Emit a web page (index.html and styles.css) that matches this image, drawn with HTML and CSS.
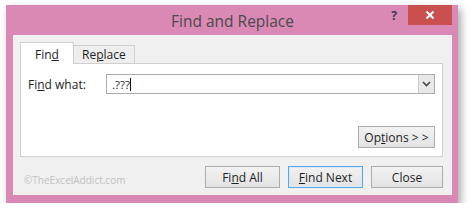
FILE: index.html
```html
<!DOCTYPE html>
<html lang="en">
<head>
    <meta charset="UTF-8">
    <title>Find and Replace</title>
    <link rel="stylesheet" href="styles.css">
</head>
<body>
    <div class="dialog">
        <div class="titlebar">
            <div class="title">Find and Replace</div>
            <div class="help">?</div>
            <div class="close-x">
                <svg width="10" height="10" viewBox="0 0 10 10">
                    <path d="M1.5 1.5 L8.5 8.5 M8.5 1.5 L1.5 8.5" stroke="#fff" stroke-width="2"/>
                </svg>
            </div>
        </div>
        <div class="content">
            <div class="tabs">
                <div class="tab active">Fin<u>d</u></div>
                <div class="tab">Re<u>p</u>lace</div>
            </div>
            <div class="panel">
                <div class="find-row">
                    <label>Fi<u>n</u>d what:</label>
                    <div class="combo">
                        <span class="combo-text">.???</span><span class="caret"></span>
                        <div class="combo-btn">
                            <svg width="9" height="6" viewBox="0 0 9 6">
                                <path d="M1 1 L4.5 4.5 L8 1" stroke="#444" stroke-width="1.6" fill="none"/>
                            </svg>
                        </div>
                    </div>
                </div>
                <div class="options-row">
                    <button class="btn options-btn">Op<u>t</u>ions &gt; &gt;</button>
                </div>
            </div>
            <div class="bottom-row">
                <span class="watermark">©TheExcelAddict.com</span>
                <button class="btn">Fi<u>n</u>d All</button>
                <button class="btn default-btn"><u>F</u>ind Next</button>
                <button class="btn close-btn">Close</button>
            </div>
        </div>
    </div>
</body>
</html>
```

FILE: styles.css
```css
body {
    margin: 0;
    padding: 5px 0 0 6px;
    background: #fff;
    font-family: 'Open Sans', 'Noto Sans', sans-serif;
    color: #1e1e1e;
}
.dialog {
    width: 439px;
    background: #da89b5;
    padding: 0 6px 8px 7px;
    box-shadow: 3px 4px 8px rgba(0, 0, 0, 0.35);
}
.titlebar {
    height: 30px;
    display: flex;
    align-items: flex-start;
    justify-content: flex-end;
    position: relative;
}
/* title is centred over the whole window, not the space left of the buttons */
.title {
    position: absolute;
    left: 0;
    right: 0;
    text-align: center;
    font-size: 15.5px;
    line-height: 33px;
    color: #4a4a4a;
}
.help {
    width: 24px;
    font-size: 12px;
    font-weight: bold;
    color: #3b3b55;
    line-height: 22px;
    text-align: center;
    margin-right: 2px;
    position: relative;
}
.close-x {
    width: 44px;
    height: 20px;
    background: #c9504f;
    display: flex;
    align-items: center;
    justify-content: center;
    position: relative;
}
.content {
    background: #f0f0f0;
    padding: 8px 9px 7px 7px;
}
.tabs {
    display: flex;
    align-items: flex-end;
    height: 20px;
}
.tab {
    font-size: 12px;
    padding: 0 10px 0 14px;
    height: 17px;
    line-height: 17px;
    border: 1px solid #d0d0d0;
    border-bottom: none;
    background: #eeeeee;
}
.tab.active {
    height: 21px;
    line-height: 23px;
    background: #fff;
    width: 28px;
    margin-bottom: -1px;
    position: relative;
    z-index: 1;
}
.tab:not(.active) {
    border-left: none;
    padding: 0 8px;
}
.panel {
    background: #fff;
    border: 1px solid #d0d0d0;
    height: 92px;
    padding: 0 7px;
    display: flex;
    flex-direction: column;
}
.find-row {
    display: flex;
    align-items: center;
    margin-top: 10px;
    height: 20px;
}
.find-row label {
    font-size: 12px;
    width: 78px;
}
.combo {
    flex: 1;
    height: 18px;
    border: 1px solid #acacac;
    display: flex;
    align-items: center;
    padding-left: 5px;
    font-size: 11.5px;
}
.combo-text {
    color: #2a2a2a;
}
.caret {
    width: 1px;
    height: 13px;
    background: #111;
}
.combo-btn {
    margin-left: auto;
    width: 15px;
    height: 18px;
    background: #e8e8e8;
    border-left: 1px solid #c8c8c8;
    display: flex;
    align-items: center;
    justify-content: center;
}
.options-row {
    margin-top: auto;
    margin-bottom: 8px;
    display: flex;
    justify-content: flex-end;
}
.btn {
    font-family: 'Open Sans', 'Noto Sans', sans-serif;
    font-size: 12px;
    color: #1e1e1e;
    width: 75px;
    height: 22px;
    padding: 0;
    border: 1px solid #adadad;
    background: linear-gradient(#f2f2f2, #e3e3e3);
}
.options-btn {
    width: 77px;
}
.bottom-row {
    display: flex;
    align-items: center;
    margin-top: 9px;
}
.watermark {
    font-size: 10px;
    color: #c2c2c2;
    margin: 6px 0 0 4px;
    flex: 1;
}
.bottom-row .btn + .btn {
    margin-left: 8px;
}
.default-btn {
    border-color: #5ea6e8;
    box-shadow: inset 0 0 0 1px #d7e8f8;
}
.bottom-row .close-btn {
    margin-left: 19px;
    width: 72px;
}
```
